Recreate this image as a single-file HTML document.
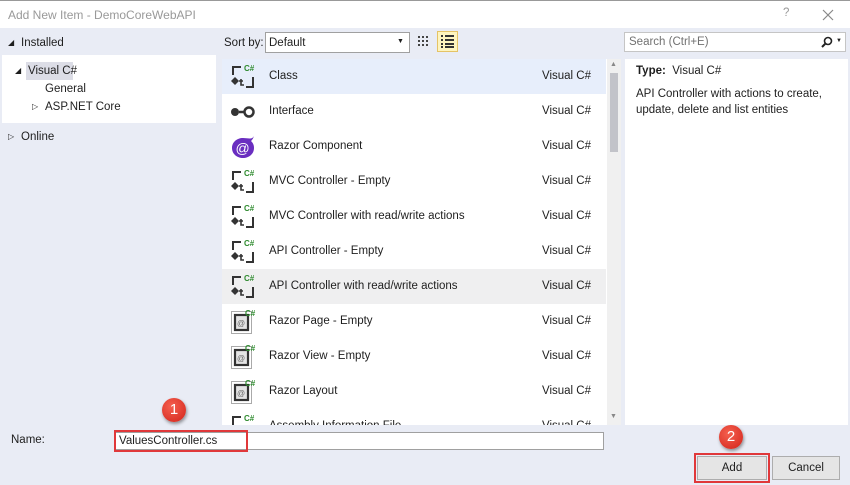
<!DOCTYPE html>
<html><head><style>
*{box-sizing:border-box;margin:0;padding:0}
body{width:850px;height:485px;overflow:hidden;background:#e9ecf5;font-family:"Liberation Sans",sans-serif;font-size:11.5px;color:#1e1e1e;position:relative}
.a{position:absolute}
.title{left:0;top:0;width:850px;height:28px;background:#fff;border-top:1px solid #999}
.row{position:absolute;left:0;width:384px;height:35px}
.row .n{position:absolute;left:47px;top:11px}
.row .t{position:absolute;left:320px;top:11px}
.row svg{position:absolute;left:8px;top:4px}
.badge{width:24px;height:24px;border-radius:50%;background:radial-gradient(circle at 40% 35%,#f5604f,#d2231a);color:#fff;font-size:15px;text-align:center;line-height:24px;box-shadow:1px 2px 3px rgba(0,0,0,.4)}
.btn{height:24px;background:#e5e5e5;border:1px solid #adadad;text-align:center;line-height:22px}
</style></head><body>
<div class="a title"><span class="a" style="left:8px;top:7px;color:#999;font-size:12px">Add New Item - DemoCoreWebAPI</span>
<span class="a" style="left:783px;top:6px;color:#999">?</span>
<svg class="a" style="left:822px;top:8px" width="12" height="12"><path d="M1 1L11 11M11 1L1 11" stroke="#888" stroke-width="1.2"/></svg></div>

<span class="a" style="left:8px;top:38px;font-size:8px">◢</span>
<span class="a" style="left:21px;top:37px">Installed</span>
<div class="a" style="left:2px;top:55px;width:214px;height:68px;background:#fff"></div>
<span class="a" style="left:15px;top:66px;font-size:8px">◢</span>
<div class="a" style="left:26px;top:62px;width:47px;height:18px;background:#dcdde6"></div>
<span class="a" style="left:28px;top:65px">Visual C#</span>
<span class="a" style="left:45px;top:83px">General</span>
<span class="a" style="left:32px;top:102px;font-size:8px">▷</span>
<span class="a" style="left:45px;top:101px">ASP.NET Core</span>
<span class="a" style="left:8px;top:132px;font-size:8px">▷</span>
<span class="a" style="left:21px;top:131px">Online</span>

<span class="a" style="left:224px;top:37px">Sort by:</span>
<div class="a" style="left:265px;top:32px;width:145px;height:21px;background:#fff;border:1px solid #a0a0a0"><span class="a" style="left:3px;top:4px">Default</span><span class="a" style="left:131px;top:5px;font-size:7px">▼</span></div>
<svg class="a" style="left:417px;top:35px" width="14" height="14"><g fill="#444"><rect x="1" y="1" width="2" height="2"/><rect x="5" y="1" width="2" height="2"/><rect x="9" y="1" width="2" height="2"/><rect x="1" y="5" width="2" height="2"/><rect x="5" y="5" width="2" height="2"/><rect x="9" y="5" width="2" height="2"/><rect x="1" y="9" width="2" height="2"/><rect x="5" y="9" width="2" height="2"/><rect x="9" y="9" width="2" height="2"/></g></svg>
<div class="a" style="left:437px;top:31px;width:21px;height:21px;background:#fdf4bf;border:1px solid #e5c365"></div>
<svg class="a" style="left:440px;top:34px" width="15" height="15"><g fill="#333"><rect x="1" y="1" width="2" height="2"/><rect x="5" y="1" width="9" height="2"/><rect x="1" y="5" width="2" height="2"/><rect x="5" y="5" width="9" height="2"/><rect x="1" y="9" width="2" height="2"/><rect x="5" y="9" width="9" height="2"/><rect x="1" y="12" width="2" height="2"/><rect x="5" y="12" width="9" height="2"/></g></svg>

<div class="a" style="left:624px;top:32px;width:222px;height:20px;background:#fff;border:1px solid #c5c5c5"><span class="a" style="left:4px;top:3px;color:#717171">Search (Ctrl+E)</span>
<svg class="a" style="left:196px;top:3px" width="12" height="12"><circle cx="7" cy="5" r="3.5" fill="none" stroke="#222" stroke-width="1.6"/><path d="M4.5 7.5L1 11" stroke="#222" stroke-width="2"/></svg><span class="a" style="left:211px;top:5px;font-size:6px">▼</span></div>

<div class="a" style="left:222px;top:59px;width:399px;height:366px;background:#fff;overflow:hidden">
<div class="a" style="left:385px;top:0;width:14px;height:366px;background:#f0f0f0"></div>
<div class="a" style="left:388px;top:14px;width:8px;height:79px;background:#c2c3c9"></div>
<span class="a" style="left:388px;top:2px;font-size:7px;color:#888">▲</span>
<span class="a" style="left:388px;top:354px;font-size:7px;color:#888">▼</span>
<div id="list"></div>
</div>

<div class="a" style="left:625px;top:59px;width:223px;height:366px;background:#fff">
<span class="a" style="left:11px;top:6px"><b>Type:</b>&nbsp; Visual C#</span>
<span class="a" style="left:11px;top:27px;line-height:16px">API Controller with actions to create,<br>update, delete and list entities</span></div>

<span class="a" style="left:11px;top:434px">Name:</span>
<div class="a" style="left:115px;top:432px;width:489px;height:18px;background:#fff;border:1px solid #a0a0a0"><span class="a" style="left:3px;top:2px">ValuesController.cs</span></div>
<div class="a" style="left:114px;top:430px;width:134px;height:22px;border:2px solid #e0383a"></div>
<div class="a btn" style="left:697px;top:456px;width:70px">Add</div>
<div class="a" style="left:694px;top:453px;width:76px;height:30px;border:2px solid #e0383a"></div>
<div class="a btn" style="left:772px;top:456px;width:68px">Cancel</div>
<div class="a badge" style="left:162px;top:398px">1</div>
<div class="a badge" style="left:719px;top:425px">2</div>

<script>
var items=["Class","Interface","Razor Component","MVC Controller - Empty","MVC Controller with read/write actions","API Controller - Empty","API Controller with read/write actions","Razor Page - Empty","Razor View - Empty","Razor Layout","Assembly Information File"];
var ctl='<svg width="26" height="26"><path d="M3 12V4h8M23 14v10h-7" fill="none" stroke="#333" stroke-width="2"/><text x="14" y="8" font-size="8" font-weight="bold" fill="#2e8b2e" font-family="Liberation Sans">C#</text><path d="M1 18l4-4 4 4-4 4z" fill="#333"/><path d="M9 18h4M11 16v6h3" stroke="#333" stroke-width="1.6" fill="none"/></svg>';
var razor='<svg width="26" height="26"><rect x="1.5" y="3.5" width="20" height="22" fill="#fff" stroke="#aaa"/><rect x="5" y="7" width="13" height="15" fill="#e4e4e4" stroke="#333" stroke-width="2.2"/><text x="7" y="18" font-size="8" fill="#666" font-family="Liberation Sans">@</text><text x="15" y="8" font-size="8" font-weight="bold" fill="#2e8b2e" font-family="Liberation Sans">C#</text></svg>';
var icf='<svg width="26" height="26"><circle cx="5" cy="14" r="4" fill="#333"/><path d="M9 14h6" stroke="#333" stroke-width="2.5"/><circle cx="19" cy="14" r="4.5" fill="none" stroke="#333" stroke-width="2.5"/></svg>';
var rc='<svg width="26" height="26"><path d="M13 5c5 0 9 2 11-2-1 3-2 4-3 5 2 2 3 4 3 7 0 6-5 10-11 10S2 21 2 15 7 5 13 5z" fill="#6a2ec0"/><text x="5.5" y="20" font-size="14" fill="#fff" font-family="Liberation Sans">@</text></svg>';
var h='';
items.forEach(function(s,i){var ic=i==1?icf:i==2?rc:(i>=7&&i<=9)?razor:ctl;
var bg=i==0?'#e7eefb':i==6?'#efeff0':'transparent';
h+='<div class="row" style="top:'+(i*35)+'px;background:'+bg+'">'+ic+'<span class="n">'+s+'</span><span class="t">Visual C#</span></div>';});
document.getElementById('list').innerHTML=h;
</script>
</body></html>
